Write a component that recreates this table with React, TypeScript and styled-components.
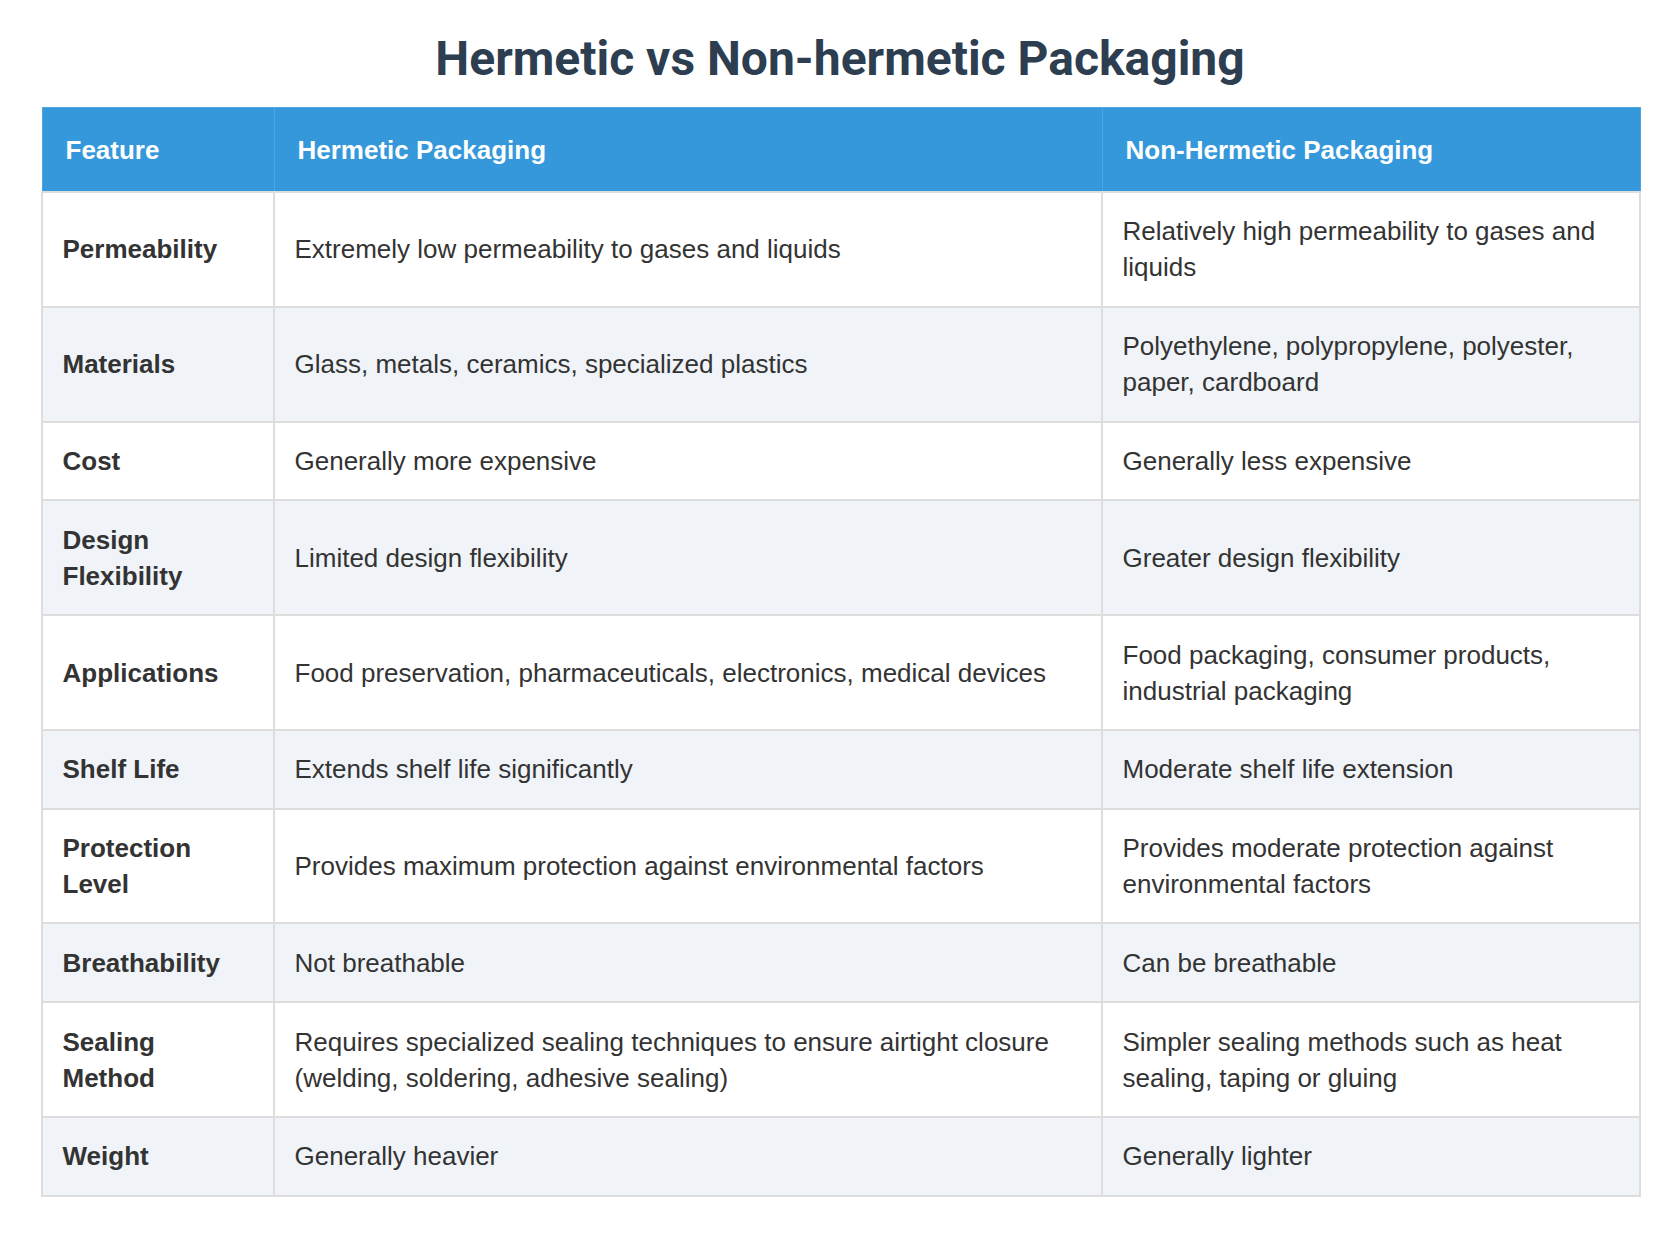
import styled, {createGlobalStyle} from 'styled-components';

type Row = {
    feature: string,
    hermetic: string,
    nonHermetic: string
}

const rows: Row[] = [
    {feature: 'Permeability', hermetic: 'Extremely low permeability to gases and liquids', nonHermetic: 'Relatively high permeability to gases and liquids'},
    {feature: 'Materials', hermetic: 'Glass, metals, ceramics, specialized plastics', nonHermetic: 'Polyethylene, polypropylene, polyester, paper, cardboard'},
    {feature: 'Cost', hermetic: 'Generally more expensive', nonHermetic: 'Generally less expensive'},
    {feature: 'Design Flexibility', hermetic: 'Limited design flexibility', nonHermetic: 'Greater design flexibility'},
    {feature: 'Applications', hermetic: 'Food preservation, pharmaceuticals, electronics, medical devices', nonHermetic: 'Food packaging, consumer products, industrial packaging'},
    {feature: 'Shelf Life', hermetic: 'Extends shelf life significantly', nonHermetic: 'Moderate shelf life extension'},
    {feature: 'Protection Level', hermetic: 'Provides maximum protection against environmental factors', nonHermetic: 'Provides moderate protection against environmental factors'},
    {feature: 'Breathability', hermetic: 'Not breathable', nonHermetic: 'Can be breathable'},
    {feature: 'Sealing Method', hermetic: 'Requires specialized sealing techniques to ensure airtight closure (welding, soldering, adhesive sealing)', nonHermetic: 'Simpler sealing methods such as heat sealing, taping or gluing'},
    {feature: 'Weight', hermetic: 'Generally heavier', nonHermetic: 'Generally lighter'},
];

export default function App() {
    return (
        <>
            <GlobalStyle/>
            <Page>
                <Title>Hermetic vs Non-hermetic Packaging</Title>
                <Table>
                    <colgroup>
                        <col style={{width: 232}}/>
                        <col style={{width: 828}}/>
                        <col style={{width: 538}}/>
                    </colgroup>
                    <thead>
                    <tr>
                        <HeadCell>Feature</HeadCell>
                        <HeadCell>Hermetic Packaging</HeadCell>
                        <HeadCell>Non-Hermetic Packaging</HeadCell>
                    </tr>
                    </thead>
                    <tbody>
                    {rows.map((row) => (
                        <BodyRow key={row.feature}>
                            <Cell $label>{row.feature}</Cell>
                            <Cell>{row.hermetic}</Cell>
                            <Cell>{row.nonHermetic}</Cell>
                        </BodyRow>
                    ))}
                    </tbody>
                </Table>
            </Page>
        </>
    );
}

const GlobalStyle = createGlobalStyle`
    body {
        margin: 0;
        background: #ffffff;
        font-family: "Liberation Sans", Arial, sans-serif;
    }
`;

const Page = styled.div`
    padding: 31px 40px 40px 41px;
`;

const Title = styled.h1`
    margin: 0 0 20px;
    font-family: Roboto, "Liberation Sans", sans-serif;
    font-size: 48px;
    line-height: 56px;
    font-weight: 700;
    color: #2c3e50;
    text-align: center;
    padding-right: 1px;
`;

const Table = styled.table`
    width: 1598px;
    border-collapse: collapse;
    table-layout: fixed;
    font-size: 26px;
    line-height: 36px;
    color: #333333;
`;

const HeadCell = styled.th`
    background: #3498db;
    color: #ffffff;
    font-weight: 700;
    text-align: left;
    padding: 23.5px 24px 23.5px 23px;
    border: 1px solid #4ea5df;
`;

const BodyRow = styled.tr`
    background: #ffffff;
    &:nth-child(even) {
        background: #f0f3f8;
    }
`;

const Cell = styled.td<{ $label?: boolean }>`
    padding: 20.4px 20px 20.4px 19.5px;
    border: 2px solid #dddddd;
    vertical-align: middle;
    font-weight: ${(p) => (p.$label ? 700 : 400)};
`;
